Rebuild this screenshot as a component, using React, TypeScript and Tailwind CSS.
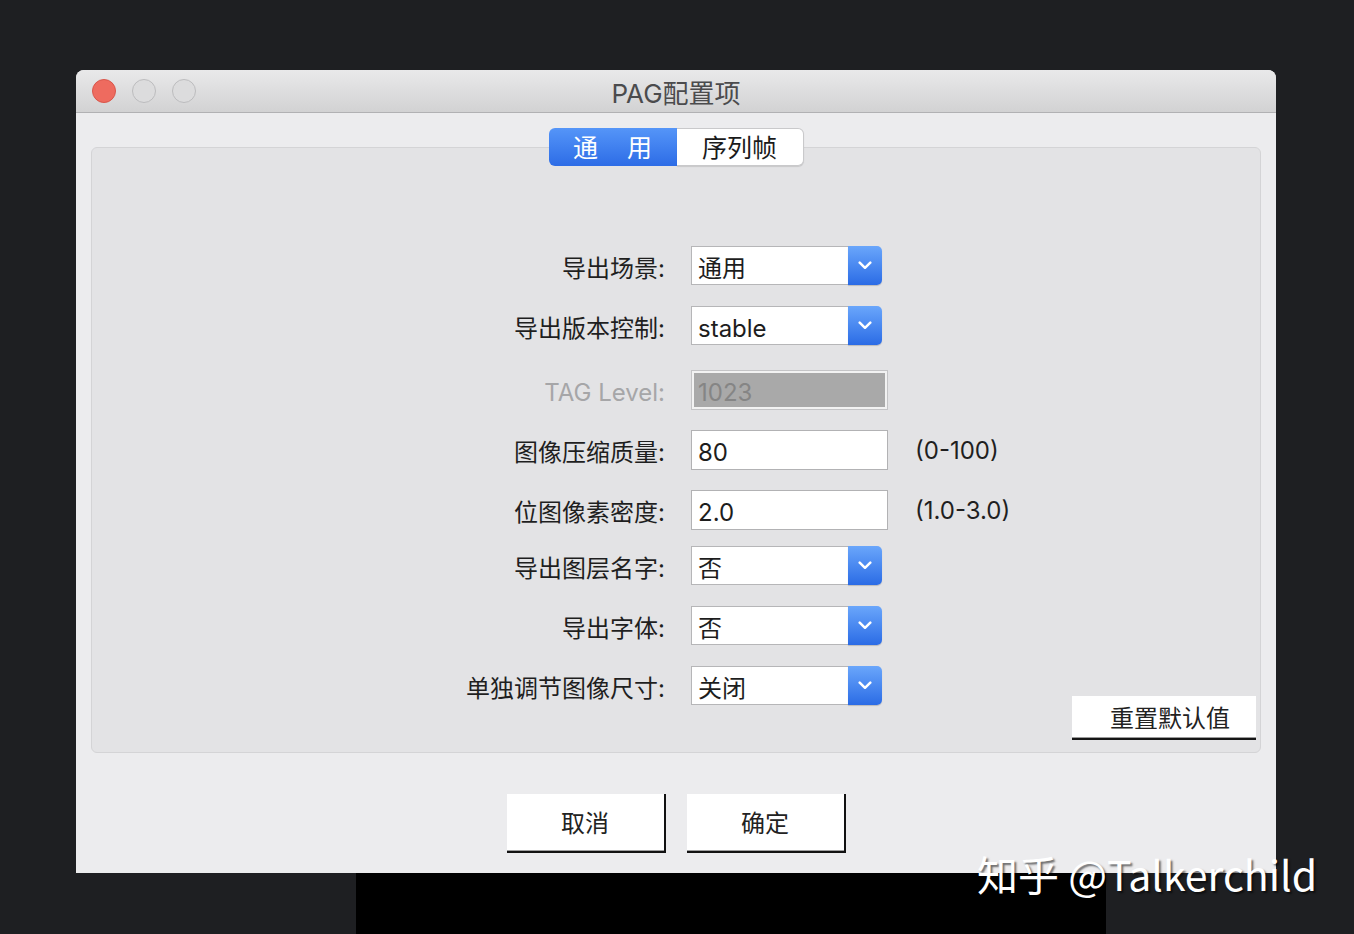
import React from "react";

const FONT = "font-['Inter','Noto_Sans_CJK_SC',sans-serif]";

function Chevron() {
  return (
    <svg width="14" height="9" viewBox="0 0 14 9">
      <polyline
        points="1.7,1.7 7,6.8 12.3,1.7"
        fill="none"
        stroke="white"
        strokeWidth="2.5"
        strokeLinecap="round"
        strokeLinejoin="round"
      />
    </svg>
  );
}

function Dropdown({ value }: { value: string }) {
  return (
    <div className="flex h-[39px] w-[191px]">
      <div className="flex flex-1 items-center border border-r-0 border-[#b6b6b8] bg-white pl-[6px] pt-[7px] text-[24px] leading-none text-[#1d1d1d]">
        {value}
      </div>
      <div className="flex w-[34px] items-center justify-center rounded-r-[5px] bg-linear-to-b from-[#6aa6fb] to-[#2b6be5] shadow-[0_1px_1px_rgba(0,0,0,0.18)]">
        <Chevron />
      </div>
    </div>
  );
}

function TextField({ value }: { value: string }) {
  return (
    <div className="flex h-[40px] w-[197px] items-center border border-[#b2b2b4] bg-white pl-[6px] pt-[5px] text-[24px] leading-none text-[#1d1d1d]">
      {value}
    </div>
  );
}

function DisabledField({ value }: { value: string }) {
  return (
    <div className="h-[40px] w-[197px] border border-[#c4c4c6] bg-[#f2f2f2] p-[2px]">
      <div className="flex h-full w-full items-center bg-[#a9a9a9] pl-[4px] pt-[5px] text-[24px] leading-none text-[#858585]">
        {value}
      </div>
    </div>
  );
}

function Label({ text, disabled }: { text: string; disabled?: boolean }) {
  return (
    <div
      className={
        "flex h-full w-[573px] items-center justify-end pt-[6px] text-[24px] leading-none " +
        (disabled ? "text-[#a6a6a8]" : "text-[#1f1f1f]")
      }
    >
      {text}
    </div>
  );
}

function Hint({ text }: { text: string }) {
  return (
    <div className="ml-[27px] pt-[2px] text-[24px] leading-none text-[#1f1f1f]">{text}</div>
  );
}

export default function App() {
  return (
    <div
      className={
        "relative h-[934px] w-[1354px] overflow-hidden bg-[#1e1f22] " + FONT
      }
    >
      <div className="pl-[76px] pt-[70px]">
        {/* window */}
        <div className="flex h-[803px] w-[1200px] flex-col overflow-hidden rounded-t-[8px] bg-[#ececee]">
          {/* title bar */}
          <div className="relative flex h-[43px] shrink-0 items-center border-b border-[#b1b1b3] bg-linear-to-b from-[#e9e9ea] to-[#d2d2d3]">
            <div className="flex items-center gap-[16px] pl-[16px]">
              <div className="h-[24px] w-[24px] rounded-full border border-[#d9564b] bg-[#ee6b5f]" />
              <div className="h-[24px] w-[24px] rounded-full border border-[#bcbcbe] bg-[#dcdcdd]" />
              <div className="h-[24px] w-[24px] rounded-full border border-[#bcbcbe] bg-[#dcdcdd]" />
            </div>
            <div className="absolute inset-0 flex items-center justify-center pt-[5px] text-[26px] leading-none text-[#4b4b4d]">
              PAG配置项
            </div>
          </div>

          {/* body */}
          <div className="flex flex-1 flex-col px-[15px] pt-[15px]">
            {/* tabs */}
            <div className="relative z-10 -mb-[19px] flex h-[38px] justify-center">
              <div className="flex h-[38px] w-[128px] items-center justify-center gap-[29px] rounded-l-[6px] bg-linear-to-b from-[#5595f8] to-[#2d6ce6] pt-[3px] text-[25px] leading-none text-white">
                <span>通</span>
                <span>用</span>
              </div>
              <div className="flex h-[38px] w-[127px] items-center justify-center rounded-r-[6px] border border-l-0 border-[#c9c9cb] bg-white pt-[3px] text-[25px] leading-none text-[#1a1a1a] shadow-[0_1px_1px_rgba(0,0,0,0.12)]">
                序列帧
              </div>
            </div>

            {/* panel */}
            <div className="flex h-[606px] flex-col rounded-[6px] border border-[#d4d4d6] bg-[#e3e3e5]">
              <div className="mt-[98px] flex h-[39px] items-center">
                <Label text="导出场景:" />
                <div className="ml-[26px]">
                  <Dropdown value="通用" />
                </div>
              </div>
              <div className="mt-[21px] flex h-[39px] items-center">
                <Label text="导出版本控制:" />
                <div className="ml-[26px]">
                  <Dropdown value="stable" />
                </div>
              </div>
              <div className="mt-[25px] flex h-[40px] items-center">
                <Label text="TAG Level:" disabled />
                <div className="ml-[26px]">
                  <DisabledField value="1023" />
                </div>
              </div>
              <div className="mt-[20px] flex h-[40px] items-center">
                <Label text="图像压缩质量:" />
                <div className="ml-[26px]">
                  <TextField value="80" />
                </div>
                <Hint text="(0-100)" />
              </div>
              <div className="mt-[20px] flex h-[40px] items-center">
                <Label text="位图像素密度:" />
                <div className="ml-[26px]">
                  <TextField value="2.0" />
                </div>
                <Hint text="(1.0-3.0)" />
              </div>
              <div className="mt-[16px] flex h-[39px] items-center">
                <Label text="导出图层名字:" />
                <div className="ml-[26px]">
                  <Dropdown value="否" />
                </div>
              </div>
              <div className="mt-[21px] flex h-[39px] items-center">
                <Label text="导出字体:" />
                <div className="ml-[26px]">
                  <Dropdown value="否" />
                </div>
              </div>
              <div className="mt-[21px] flex items-start">
                <div className="flex h-[39px] items-center">
                  <Label text="单独调节图像尺寸:" />
                  <div className="ml-[26px]">
                    <Dropdown value="关闭" />
                  </div>
                </div>
                <button className="ml-auto mr-[4px] mt-[30px] flex h-[44px] w-[184px] items-center justify-center border-b-2 border-[#151515] bg-white pl-[12px] pt-[4px] text-[24px] leading-none text-[#222] shadow-[inset_0_-1px_0_#9a9a9a]">
                  重置默认值
                </button>
              </div>
            </div>

            {/* bottom buttons */}
            <div className="mt-[41px] flex justify-center gap-[21px]">
              <button className="flex h-[59px] w-[159px] items-center justify-center border-b-2 border-r-2 border-[#121212] bg-white pt-[3px] text-[24px] leading-none text-[#222] shadow-[inset_0_-1px_0_#a0a0a0]">
                取消
              </button>
              <button className="flex h-[59px] w-[159px] items-center justify-center border-b-2 border-r-2 border-[#121212] bg-white pt-[3px] text-[24px] leading-none text-[#222] shadow-[inset_0_-1px_0_#a0a0a0]">
                确定
              </button>
            </div>
          </div>
        </div>
      </div>

      {/* black block below window */}
      <div className="ml-[356px] h-[61px] w-[750px] bg-black" />

      {/* watermark */}
      <div className="absolute left-[977px] top-[853px] whitespace-nowrap font-['Noto_Sans_CJK_SC',sans-serif] text-[41px] font-normal leading-none text-white [text-shadow:2px_2px_2px_rgba(0,0,0,0.55)]">
        知乎 @Talkerchild
      </div>
    </div>
  );
}
